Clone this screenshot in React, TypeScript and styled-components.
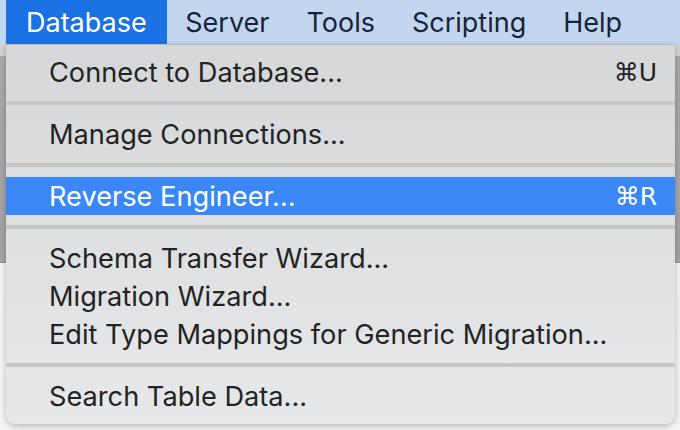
import { FC } from 'react';
import styled, { createGlobalStyle } from 'styled-components';

const GlobalStyle = createGlobalStyle`
  html, body {
    margin: 0;
    padding: 0;
    width: 680px;
    height: 430px;
    overflow: hidden;
    font-family: Inter, "DejaVu Sans", sans-serif;
  }
`;

const Screen = styled.div`
  position: relative;
  width: 680px;
  height: 430px;
  overflow: hidden;
  background: #f2f2f2;
`;

const MenuBar = styled.div`
  display: flex;
  height: 44px;
  padding-left: 6px;
  background: #c3d6ef;
`;

const BarItem = styled.div<{ $active?: boolean }>`
  display: flex;
  align-items: center;
  padding: 0 ${({ $active }) => ($active ? '20px' : '18.5px')};
  font-size: 27px;
  color: ${({ $active }) => ($active ? '#ffffff' : '#16233a')};
  background: ${({ $active }) => ($active ? '#1b72e4' : 'transparent')};
`;

const Backdrop = styled.div`
  display: flex;
  flex-direction: column;
  height: 386px;
`;

const Toolbar = styled.div`
  height: 218px;
  background: linear-gradient(#d2d2d2 0, #d2d2d2 12px, #a9a9a9 12px, #a4a4a4);
  border-bottom: 1px solid #8d8d8d;
`;

const Content = styled.div`
  flex: 1;
  background: #f4f4f4;
`;

const Dropdown = styled.div`
  position: absolute;
  top: 44px;
  left: 6px;
  width: 669px;
  padding: 8px 0 9px;
  box-sizing: border-box;
  background: linear-gradient(#d6d7d9, #e7e8ea);
  border-top: 1px solid #b9babc;
  border-radius: 0 0 10px 10px;
  box-shadow: 0 2px 6px rgba(0, 0, 0, 0.25);
`;

const Item = styled.div<{ $selected?: boolean }>`
  display: flex;
  align-items: center;
  justify-content: space-between;
  height: 38px;
  padding: 0 18px 0 43px;
  font-size: 27.2px;
  color: ${({ $selected }) => ($selected ? '#ffffff' : '#232323')};
  background: ${({ $selected }) => ($selected ? '#3a87f5' : 'transparent')};
`;

const Shortcut = styled.span`
  font-family: "DejaVu Sans", Inter, sans-serif;
  font-size: 25px;
`;

const Separator = styled.div`
  height: 4px;
  margin: 10px 0;
  background: #c5c6c8;
`;

type Entry = { label: string; shortcut?: string; selected?: boolean } | 'sep';

const entries: Entry[] = [
  { label: 'Connect to Database...', shortcut: '⌘U' },
  'sep',
  { label: 'Manage Connections...' },
  'sep',
  { label: 'Reverse Engineer...', shortcut: '⌘R', selected: true },
  'sep',
  { label: 'Schema Transfer Wizard...' },
  { label: 'Migration Wizard...' },
  { label: 'Edit Type Mappings for Generic Migration...' },
  'sep',
  { label: 'Search Table Data...' },
];

const menus = ['Database', 'Server', 'Tools', 'Scripting', 'Help'];

const App: FC = () => {
  return (
    <>
      <GlobalStyle />
      <Screen>
        <MenuBar>
          {menus.map((m, i) => (
            <BarItem key={m} $active={i === 0}>
              {m}
            </BarItem>
          ))}
        </MenuBar>
        <Backdrop>
          <Toolbar />
          <Content />
        </Backdrop>
        <Dropdown>
          {entries.map((e, i) =>
            e === 'sep' ? (
              <Separator key={i} />
            ) : (
              <Item key={i} $selected={e.selected}>
                <span>{e.label}</span>
                {e.shortcut && <Shortcut>{e.shortcut}</Shortcut>}
              </Item>
            ),
          )}
        </Dropdown>
      </Screen>
    </>
  );
};

export default App;
